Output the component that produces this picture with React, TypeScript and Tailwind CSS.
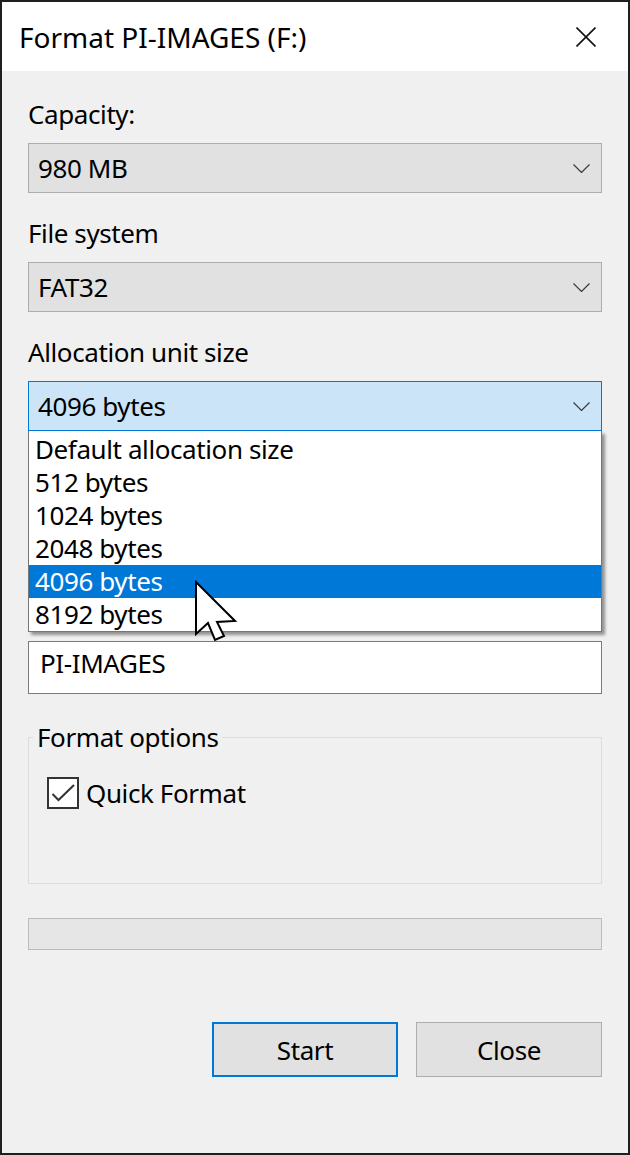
import React from 'react';

const Chevron: React.FC = () => (
    <svg width="17" height="9" viewBox="0 0 17 9" fill="none" className="shrink-0">
        <path d="M0.5 0.5 L8.5 8.5 L16.5 0.5" stroke="#3c3c3c" strokeWidth="1.2" />
    </svg>
);

const FieldLabel: React.FC<{ children: React.ReactNode; className?: string }> = ({ children, className = '' }) => (
    <div className={`h-[36px] leading-[36px] ${className}`}>{children}</div>
);

const SelectBox: React.FC<{ value: string; open?: boolean }> = ({ value, open = false }) => (
    <div
        className={`flex h-[50px] items-center justify-between border pl-[9px] pr-[11px] ${
            open ? 'border-[#0078d7] bg-[#cce4f7]' : 'border-[#adadad] bg-[#e1e1e1]'
        }`}
    >
        <span className="leading-[36px]">{value}</span>
        <Chevron />
    </div>
);

const allocationSizes = [
    'Default allocation size',
    '512 bytes',
    '1024 bytes',
    '2048 bytes',
    '4096 bytes',
    '8192 bytes',
];

const Cursor: React.FC = () => (
    <svg
        width="44"
        height="64"
        viewBox="-2 -2 44 64"
        className="pointer-events-none absolute left-[192px] top-[578px] z-20"
    >
        <polygon
            points="0,0 0,52 12,41 19,58 28,54 21,40 39,39"
            fill="#ffffff"
            stroke="#000000"
            strokeWidth="2"
            strokeLinejoin="miter"
        />
    </svg>
);

export default function App() {
    const selected = '4096 bytes';

    return (
        <div className="relative flex h-[1155px] w-[630px] flex-col border-2 border-[#1f1f1f] bg-[#f0f0f0] font-['Noto_Sans','Open_Sans',sans-serif] text-[26px] tracking-[-0.4px] text-black">
            {/* title bar */}
            <div className="flex h-[69px] shrink-0 items-center justify-between bg-white pl-[17px] pr-[32px]">
                <span className="text-[28px] leading-[36px] tracking-normal">Format PI-IMAGES (F:)</span>
                <svg width="20" height="20" viewBox="0 0 20 20" fill="none">
                    <path d="M0.5 0.5 L19.5 19.5 M19.5 0.5 L0.5 19.5" stroke="#111" strokeWidth="1.6" />
                </svg>
            </div>

            <div className="flex flex-1 flex-col px-[26px] pt-[25px]">
                <FieldLabel>Capacity:</FieldLabel>
                <div className="mt-[11px]">
                    <SelectBox value="980 MB" />
                </div>

                <FieldLabel className="mt-[22px]">File system</FieldLabel>
                <div className="mt-[11px]">
                    <SelectBox value="FAT32" />
                </div>

                <FieldLabel className="mt-[22px]">Allocation unit size</FieldLabel>
                <div className="relative z-10 mt-[11px]">
                    <SelectBox value={selected} open />
                    <ul className="absolute left-0 right-0 top-full border-x border-b border-[#767676] bg-white pt-[2px] shadow-[3px_3px_3px_rgba(0,0,0,0.4)]">
                        {allocationSizes.map((size) => (
                            <li
                                key={size}
                                className={`h-[33px] pl-[6px] leading-[33px] ${
                                    size === selected ? 'bg-[#0078d7] text-white' : ''
                                }`}
                            >
                                {size}
                            </li>
                        ))}
                    </ul>
                </div>

                {/* space covered by the open list */}
                <div className="h-[210px]" />

                <div className="flex h-[53px] border border-[#7a7a7a] bg-white pl-[11px] pt-[3px]">
                    <span className="leading-[36px]">PI-IMAGES</span>
                </div>

                <fieldset className="mt-[25px] border border-[#dcdcdc] pb-[72px] pl-[4px]">
                    <legend className="px-[4px] leading-[36px]">Format options</legend>
                    <label className="ml-[14px] mt-[20px] flex h-[36px] items-center gap-[7px]">
                        <span className="flex h-[32px] w-[32px] items-center justify-center border-2 border-[#333333] bg-white">
                            <svg width="28" height="28" viewBox="2 2 28 28" fill="none">
                                <polyline points="5.5,17 11.5,23 27,8" stroke="#333333" strokeWidth="2" />
                            </svg>
                        </span>
                        <span className="leading-[36px]">Quick Format</span>
                    </label>
                </fieldset>

                <div className="mt-[34px] h-[32px] border border-[#bcbcbc] bg-[#e6e6e6]" />

                <div className="mt-[72px] flex justify-end gap-[18px]">
                    <button className="h-[55px] w-[186px] border-2 border-[#0078d7] bg-[#e1e1e1] leading-[36px]">
                        Start
                    </button>
                    <button className="h-[55px] w-[186px] border border-[#adadad] bg-[#e1e1e1] leading-[36px]">
                        Close
                    </button>
                </div>
            </div>

            <Cursor />
        </div>
    );
}
